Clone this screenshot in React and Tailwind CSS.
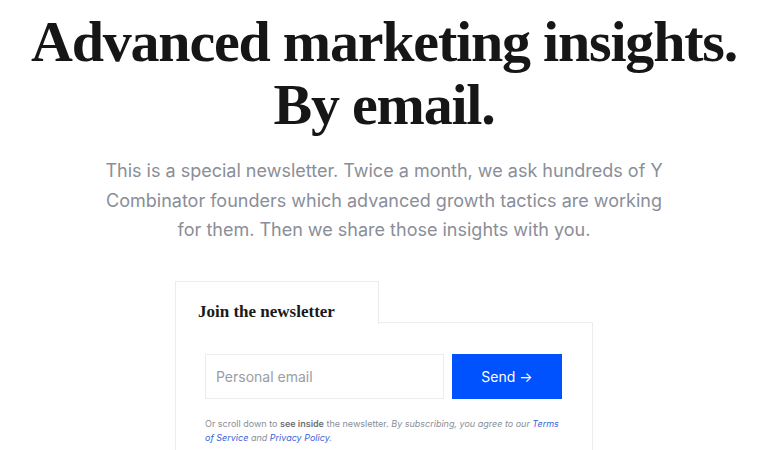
import React from 'react';

const serif = { fontFamily: '"Liberation Serif", "DejaVu Serif", serif' };

export default function App() {
  return (
    <div className="min-h-screen bg-white flex flex-col items-center" style={{ fontFamily: 'Inter, "Liberation Sans", sans-serif' }}>
      <h1
        className="mt-[10px] text-center text-[58px] leading-[63px] font-bold tracking-[-1.2px] text-[#161616]"
        style={serif}
      >
        Advanced marketing insights.
        <br />
        By email.
      </h1>

      <p className="mt-[20px] w-[570px] text-center text-[18px] leading-[29.5px] text-[#8a8e98]">
        This is a special newsletter. Twice a month, we ask hundreds of Y Combinator founders which advanced growth
        tactics are working for them. Then we share those insights with you.
      </p>

      {/* Newsletter card */}
      <div className="mt-[36px] w-[418px] flex flex-col">
        <div className="flex">
          <div className="w-[204px] h-[43px] border border-b-0 border-[#ececec] bg-white relative z-10 -mb-px pl-[22px] pt-[17px]">
            <span className="text-[17px] font-bold text-[#1a1a1a] leading-none" style={serif}>
              Join the newsletter
            </span>
          </div>
          <div className="flex-1 border-b border-[#ececec]" />
        </div>
        <div className="border border-t-0 border-[#ececec] px-[29px] pt-[31px] pb-[20px]">
          <div className="flex gap-[8px]">
            <input
              placeholder="Personal email"
              className="w-[239px] h-[45px] border border-[#ececec] px-[10px] text-[14px] text-[#333] placeholder:text-[#9a9da3] outline-none"
            />
            <button className="w-[110px] h-[45px] bg-[#0052ff] text-white text-[14px] flex items-center justify-center gap-1">
              Send <span>→</span>
            </button>
          </div>
          <div className="mt-[18px] text-[9px] leading-[14px] text-[#8a8e98]">
            <p>
              Or scroll down to <strong className="font-semibold text-[#6b6f78]">see inside</strong> the newsletter.{' '}
              <em>By subscribing, you agree to our </em>
              <em className="text-[#3d5fd6]">Terms</em>
            </p>
            <p>
              <em className="text-[#3d5fd6]">of Service</em>
              <em> and </em>
              <em className="text-[#3d5fd6]">Privacy Policy</em>
              <em>.</em>
            </p>
          </div>
        </div>
      </div>
    </div>
  );
}
